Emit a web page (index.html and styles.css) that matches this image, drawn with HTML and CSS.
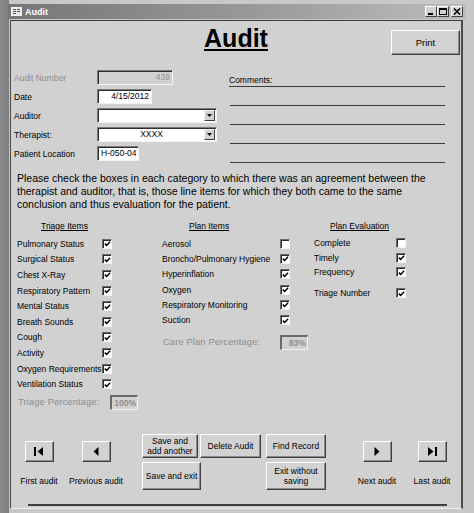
FILE: index.html
```html
<!DOCTYPE html>
<html>
<head>
<meta charset="utf-8">
<title>Audit</title>
<link rel="stylesheet" href="styles.css">
</head>
<body>
<div class="window">
  <div class="titlebar">
    <svg class="ticon" width="11" height="9" viewBox="0 0 11 9"><rect x="0.5" y="0.5" width="10" height="8" fill="#e8e8e8" stroke="#f4f4f4"/><rect x="2" y="2" width="3" height="1" fill="#555"/><rect x="2" y="4" width="3" height="1" fill="#555"/><rect x="2" y="6" width="3" height="1" fill="#555"/><rect x="6" y="2" width="3" height="1" fill="#555"/><rect x="6" y="4" width="3" height="1" fill="#555"/></svg>
    <span class="ttext">Audit</span>
    <div class="tspacer"></div>
    <div class="tbtns">
      <span class="cbtn"><svg width="8" height="7" viewBox="0 0 8 7"><rect x="1" y="5" width="5" height="2" fill="#000"/></svg></span>
      <span class="cbtn"><svg width="8" height="7" viewBox="0 0 8 7"><rect x="0.5" y="0.5" width="7" height="6" fill="none" stroke="#000"/><rect x="0" y="0" width="8" height="2" fill="#000"/></svg></span>
      <span class="cbtn close"><svg width="8" height="7" viewBox="0 0 8 7"><path d="M1 0.5 L7 6.5 M7 0.5 L1 6.5" stroke="#000" stroke-width="1.5"/></svg></span>
    </div>
  </div>
  <div class="client">
    <div class="form">
      <div class="header">
        <div></div>
        <h1 class="title">Audit</h1>
        <button class="btn print">Print</button>
      </div>

      <div class="top">
        <div class="fields">
          <div class="frow"><span class="lbl dis">Audit Number</span><div class="tbox disabled w76 right">439</div></div>
          <div class="frow"><span class="lbl">Date</span><div class="tbox w55 right">4/15/2012</div></div>
          <div class="frow"><span class="lbl">Auditor</span><div class="combo w120"><span class="ctext"></span><span class="dd"><svg width="5" height="3" viewBox="0 0 5 3"><polygon points="0,0 5,0 2.5,3" fill="#000"/></svg></span></div></div>
          <div class="frow"><span class="lbl">Therapist:</span><div class="combo w120"><span class="ctext">XXXX</span><span class="dd"><svg width="5" height="3" viewBox="0 0 5 3"><polygon points="0,0 5,0 2.5,3" fill="#000"/></svg></span></div></div>
          <div class="frow"><span class="lbl">Patient Location</span><div class="tbox w42">H-050-04</div></div>
        </div>
        <div class="comments">
          <div class="cline first">Comments:</div>
          <div class="cline"></div>
          <div class="cline"></div>
          <div class="cline"></div>
          <div class="cline"></div>
        </div>
      </div>

      <p class="instr">Please check the boxes in each category to which there was an agreement between the<br>therapist and auditor, that is, those line items for which they both came to the same<br>conclusion and thus evaluation for the patient.</p>

      <div class="cols">
        <div class="col c1">
          <div class="chead">Triage Items</div>
          <div class="crow"><span class="clbl">Pulmonary Status</span><span class="cb on"><svg width="8" height="8" viewBox="0 0 8 8"><path d="M1 3.6 L3 5.6 L7 1.4" fill="none" stroke="#000" stroke-width="1.7"/></svg></span></div>
          <div class="crow"><span class="clbl">Surgical Status</span><span class="cb on"><svg width="8" height="8" viewBox="0 0 8 8"><path d="M1 3.6 L3 5.6 L7 1.4" fill="none" stroke="#000" stroke-width="1.7"/></svg></span></div>
          <div class="crow"><span class="clbl">Chest X-Ray</span><span class="cb on"><svg width="8" height="8" viewBox="0 0 8 8"><path d="M1 3.6 L3 5.6 L7 1.4" fill="none" stroke="#000" stroke-width="1.7"/></svg></span></div>
          <div class="crow"><span class="clbl">Respiratory Pattern</span><span class="cb on"><svg width="8" height="8" viewBox="0 0 8 8"><path d="M1 3.6 L3 5.6 L7 1.4" fill="none" stroke="#000" stroke-width="1.7"/></svg></span></div>
          <div class="crow"><span class="clbl">Mental Status</span><span class="cb on"><svg width="8" height="8" viewBox="0 0 8 8"><path d="M1 3.6 L3 5.6 L7 1.4" fill="none" stroke="#000" stroke-width="1.7"/></svg></span></div>
          <div class="crow"><span class="clbl">Breath Sounds</span><span class="cb on"><svg width="8" height="8" viewBox="0 0 8 8"><path d="M1 3.6 L3 5.6 L7 1.4" fill="none" stroke="#000" stroke-width="1.7"/></svg></span></div>
          <div class="crow"><span class="clbl">Cough</span><span class="cb on"><svg width="8" height="8" viewBox="0 0 8 8"><path d="M1 3.6 L3 5.6 L7 1.4" fill="none" stroke="#000" stroke-width="1.7"/></svg></span></div>
          <div class="crow"><span class="clbl">Activity</span><span class="cb on"><svg width="8" height="8" viewBox="0 0 8 8"><path d="M1 3.6 L3 5.6 L7 1.4" fill="none" stroke="#000" stroke-width="1.7"/></svg></span></div>
          <div class="crow"><span class="clbl">Oxygen Requirements</span><span class="cb on"><svg width="8" height="8" viewBox="0 0 8 8"><path d="M1 3.6 L3 5.6 L7 1.4" fill="none" stroke="#000" stroke-width="1.7"/></svg></span></div>
          <div class="crow"><span class="clbl">Ventilation Status</span><span class="cb on"><svg width="8" height="8" viewBox="0 0 8 8"><path d="M1 3.6 L3 5.6 L7 1.4" fill="none" stroke="#000" stroke-width="1.7"/></svg></span></div>
          <div class="prow p1"><span class="plbl">Triage Percentage:</span><span class="pbox">100%</span></div>
        </div>
        <div class="col c2">
          <div class="chead">Plan Items</div>
          <div class="crow"><span class="clbl">Aerosol</span><span class="cb"></span></div>
          <div class="crow"><span class="clbl">Broncho/Pulmonary Hygiene</span><span class="cb on"><svg width="8" height="8" viewBox="0 0 8 8"><path d="M1 3.6 L3 5.6 L7 1.4" fill="none" stroke="#000" stroke-width="1.7"/></svg></span></div>
          <div class="crow"><span class="clbl">Hyperinflation</span><span class="cb on"><svg width="8" height="8" viewBox="0 0 8 8"><path d="M1 3.6 L3 5.6 L7 1.4" fill="none" stroke="#000" stroke-width="1.7"/></svg></span></div>
          <div class="crow"><span class="clbl">Oxygen</span><span class="cb on"><svg width="8" height="8" viewBox="0 0 8 8"><path d="M1 3.6 L3 5.6 L7 1.4" fill="none" stroke="#000" stroke-width="1.7"/></svg></span></div>
          <div class="crow"><span class="clbl">Respiratory Monitoring</span><span class="cb on"><svg width="8" height="8" viewBox="0 0 8 8"><path d="M1 3.6 L3 5.6 L7 1.4" fill="none" stroke="#000" stroke-width="1.7"/></svg></span></div>
          <div class="crow"><span class="clbl">Suction</span><span class="cb on"><svg width="8" height="8" viewBox="0 0 8 8"><path d="M1 3.6 L3 5.6 L7 1.4" fill="none" stroke="#000" stroke-width="1.7"/></svg></span></div>
          <div class="prow p2"><span class="plbl">Care Plan Percentage:</span><span class="pbox">83%</span></div>
        </div>
        <div class="col c3">
          <div class="chead">Plan Evaluation</div>
          <div class="crow"><span class="clbl">Complete</span><span class="cb"></span></div>
          <div class="crow"><span class="clbl">Timely</span><span class="cb on"><svg width="8" height="8" viewBox="0 0 8 8"><path d="M1 3.6 L3 5.6 L7 1.4" fill="none" stroke="#000" stroke-width="1.7"/></svg></span></div>
          <div class="crow"><span class="clbl">Frequency</span><span class="cb on"><svg width="8" height="8" viewBox="0 0 8 8"><path d="M1 3.6 L3 5.6 L7 1.4" fill="none" stroke="#000" stroke-width="1.7"/></svg></span></div>
          <div class="crow gap"><span class="clbl">Triage Number</span><span class="cb on"><svg width="8" height="8" viewBox="0 0 8 8"><path d="M1 3.6 L3 5.6 L7 1.4" fill="none" stroke="#000" stroke-width="1.7"/></svg></span></div>
        </div>
      </div>

      <div class="bottom">
        <div class="nav n1">
          <button class="btn navbtn"><svg width="10" height="9" viewBox="0 0 10 9"><rect x="0" y="0" width="2" height="9" fill="#000"/><polygon points="9,0 3.5,4.5 9,9" fill="#000"/></svg></button>
          <span class="navlbl">First audit</span>
        </div>
        <div class="nav n2">
          <button class="btn navbtn"><svg width="6" height="9" viewBox="0 0 6 9"><polygon points="5.5,0 0.5,4.5 5.5,9" fill="#000"/></svg></button>
          <span class="navlbl">Previous audit</span>
        </div>
        <div class="mid">
          <button class="btn mb b1">Save and<br>add another</button>
          <button class="btn mb b2">Delete Audit</button>
          <button class="btn mb b3">Find Record</button>
          <button class="btn mb b4">Save and exit</button>
          <button class="btn mb b5">Exit without<br>saving</button>
        </div>
        <div class="nav n3">
          <button class="btn navbtn"><svg width="6" height="9" viewBox="0 0 6 9"><polygon points="0.5,0 5.5,4.5 0.5,9" fill="#000"/></svg></button>
          <span class="navlbl">Next audit</span>
        </div>
        <div class="nav n4">
          <button class="btn navbtn"><svg width="10" height="9" viewBox="0 0 10 9"><polygon points="1,0 6.5,4.5 1,9" fill="#000"/><rect x="8" y="0" width="2" height="9" fill="#000"/></svg></button>
          <span class="navlbl">Last audit</span>
        </div>
      </div>
      <div class="rule"></div>
    </div>
  </div>
</div>
</body>
</html>
```

FILE: styles.css
```css
* { box-sizing: border-box; }
html, body { margin: 0; padding: 0; }
body {
  width: 474px;
  height: 513px;
  overflow: hidden;
  background: #c6c6c6;
  font-family: "Liberation Sans", Arial, sans-serif;
  color: #000;
}
.window {
  width: 474px;
  height: 513px;
  display: flex;
  flex-direction: column;
  background: linear-gradient(to right, #8a8a8a 0, #7e7e7e 9px, #c8c8c8 9px);
}
.titlebar {
  height: 15px;
  margin: 4px 8px 1px 8px;
  background: linear-gradient(to right, #767676, #9a9a9a 55%, #bdbdbd);
  display: flex;
  align-items: center;
  padding-left: 3px;
  padding-right: 3px;
}
.ticon { display: block; }
.ttext {
  color: #fff;
  font-weight: bold;
  font-size: 9px;
  margin-left: 3px;
}
.tspacer { flex: 1; }
.tbtns { display: flex; gap: 0; }
.cbtn {
  width: 12px;
  height: 11px;
  display: flex;
  align-items: center;
  justify-content: center;
  background: #d2d2d2;
  border: 1px solid;
  border-color: #fff #404040 #404040 #fff;
}
.cbtn.close { margin-left: 2px; }
.cbtn svg { display: block; }

.client {
  display: flex;
  height: 489px;
  padding-left: 10px;
}
.form {
  width: 453px;
  height: 489px;
  background: #d1d1d1;
  border-top: 1px solid #3c3c3c;
  border-left: 1px solid #4a4a4a;
  border-right: 2px solid #4a4a4a;
  border-bottom: 1px solid #f0f0f0;
  display: flex;
  flex-direction: column;
}

/* header */
.header {
  height: 49px;
  display: grid;
  grid-template-columns: 1fr auto 1fr;
  align-items: start;
}
.title {
  margin: 5px 0 0 0;
  font-size: 25px;
  line-height: 25px;
  font-weight: bold;
  text-decoration: underline;
  text-decoration-thickness: 2px;
  text-underline-offset: 2px;
}
.btn {
  font-family: "Liberation Sans", Arial, sans-serif;
  background: #d2d2d2;
  border: 1px solid;
  border-color: #fff #404040 #404040 #fff;
  box-shadow: inset -1px -1px #8a8a8a;
  color: #000;
  padding: 0;
  margin: 0;
  font-size: 8.5px;
  line-height: 10px;
  display: flex;
  align-items: center;
  justify-content: center;
  text-align: center;
}
.print {
  justify-self: end;
  margin-top: 9px;
  margin-right: 1px;
  width: 69px;
  height: 25px;
  font-size: 9.5px;
}

/* top fields */
.top {
  display: flex;
  align-items: flex-start;
  padding-left: 3px;
}
.fields {
  width: 203px;
  display: flex;
  flex-direction: column;
  gap: 4px;
}
.frow {
  display: flex;
  align-items: center;
  height: 15px;
}
.lbl {
  width: 83px;
  font-size: 8.5px;
  white-space: nowrap;
}
.lbl.dis { color: #8e8e8e; }
.tbox, .combo {
  height: 15px;
  background: #fff;
  border-top: 1px solid #7a7a7a;
  border-left: 1px solid #7a7a7a;
  border-bottom: 1px solid #f4f4f4;
  border-right: 1px solid #f4f4f4;
  box-shadow: inset 1px 1px #2e2e2e;
  font-size: 8.5px;
  line-height: 13px;
  padding: 0 2px 0 3px;
  white-space: nowrap;
}
.tbox.right { text-align: right; }
.tbox.disabled { background: #d1d1d1; color: #8e8e8e; }
.w76 { width: 76px; }
.w55 { width: 55px; }
.w42 { width: 42px; }
.w120 { width: 120px; }
.combo {
  display: flex;
  align-items: center;
  padding: 1px 1px 1px 1px;
}
.ctext {
  flex: 1;
  text-align: center;
  line-height: 11px;
}
.dd {
  width: 11px;
  height: 11px;
  background: #d2d2d2;
  border: 1px solid;
  border-color: #f4f4f4 #404040 #404040 #f4f4f4;
  display: flex;
  align-items: center;
  justify-content: center;
}
.dd svg { display: block; }

.comments {
  margin-left: 12px;
  width: 216px;
}
.cline {
  height: 19px;
  border-bottom: 1px solid #3a3a3a;
  margin-left: 1px;
}
.cline.first {
  height: 17px;
  margin-left: 0;
  font-size: 8.5px;
  line-height: 12px;
  padding-top: 4px;
}

.instr {
  margin: 9px 0 0 6px;
  font-size: 10.5px;
  line-height: 13px;
  white-space: nowrap;
}

/* columns */
.cols {
  display: flex;
  align-items: flex-start;
  margin-top: 9px;
  padding-left: 6px;
}
.col { display: flex; flex-direction: column; }
.c1 { width: 145px; }
.c2 { width: 152px; }
.c3 { width: 140px; }
.chead {
  font-size: 8.5px;
  line-height: 12px;
  text-decoration: underline;
  margin-bottom: 4px;
  white-space: nowrap;
}
.c1 .chead { padding-left: 24px; }
.c2 .chead { padding-left: 27px; }
.c3 .chead { padding-left: 16px; }
.crow {
  display: flex;
  align-items: center;
  height: 15.6px;
}
.c2 .crow { height: 15.3px; }
.c3 .crow { height: 14.6px; }
.c3 .crow.gap { margin-top: 6px; }
.clbl {
  font-size: 8.5px;
  white-space: nowrap;
}
.c1 .clbl { width: 85px; }
.c2 .clbl { width: 118px; }
.c3 .clbl { width: 82px; }
.cb {
  width: 10px;
  height: 10px;
  background: #fff;
  border-top: 1px solid #6a6a6a;
  border-left: 1px solid #6a6a6a;
  border-bottom: 1px solid #f4f4f4;
  border-right: 1px solid #f4f4f4;
  box-shadow: inset 1px 1px #2a2a2a;
  display: flex;
  align-items: center;
  justify-content: center;
  padding: 1px 0 0 1px;
}
.cb svg { display: block; }

.prow {
  display: flex;
  align-items: center;
  height: 15px;
}
.p1 { margin-top: 3px; padding-left: 1px; }
.p2 { margin-top: 7px; padding-left: 1px; }
.plbl {
  font-size: 9.3px;
  color: #8c8c8c;
  letter-spacing: 0.15px;
  white-space: nowrap;
}
.p1 .plbl { width: 92px; }
.p2 .plbl { width: 117px; }
.pbox {
  width: 28px;
  height: 15px;
  border-top: 2px solid #6a6a6a;
  border-left: 2px solid #6a6a6a;
  border-bottom: 1px solid #f0f0f0;
  border-right: 1px solid #f0f0f0;
  font-size: 8.5px;
  font-weight: bold;
  color: #8e8e8e;
  text-align: right;
  line-height: 12px;
  padding-right: 1px;
}

/* bottom buttons */
.bottom {
  display: flex;
  align-items: flex-start;
  margin-top: 24px;
  height: 56px;
}
.nav {
  width: 56px;
  display: flex;
  flex-direction: column;
  align-items: center;
  padding-top: 7px;
}
.n2 { margin-left: 1px; }
.n3 { margin-left: 23px; }
.n4 { margin-left: -1px; }
.navbtn {
  width: 29px;
  height: 21px;
}
.navbtn svg { display: block; }
.navlbl {
  margin-top: 13px;
  font-size: 8.5px;
  line-height: 12px;
  white-space: nowrap;
}
.mid {
  margin-left: 18px;
  display: grid;
  grid-template-columns: 58px 66px 60px;
  grid-template-rows: 24px 28px;
  row-gap: 4px;
}
.mb { height: 100%; }
.b1 { width: 56px; }
.b2 { width: 61px; }
.b3 { width: 60px; }
.b4 { width: 59px; grid-column: 1; grid-row: 2; }
.b5 { width: 60px; grid-column: 3; grid-row: 2; }

.rule {
  margin: 14px 0 0 17px;
  width: 419px;
  height: 2px;
  background: #3c3c3c;
}
```
